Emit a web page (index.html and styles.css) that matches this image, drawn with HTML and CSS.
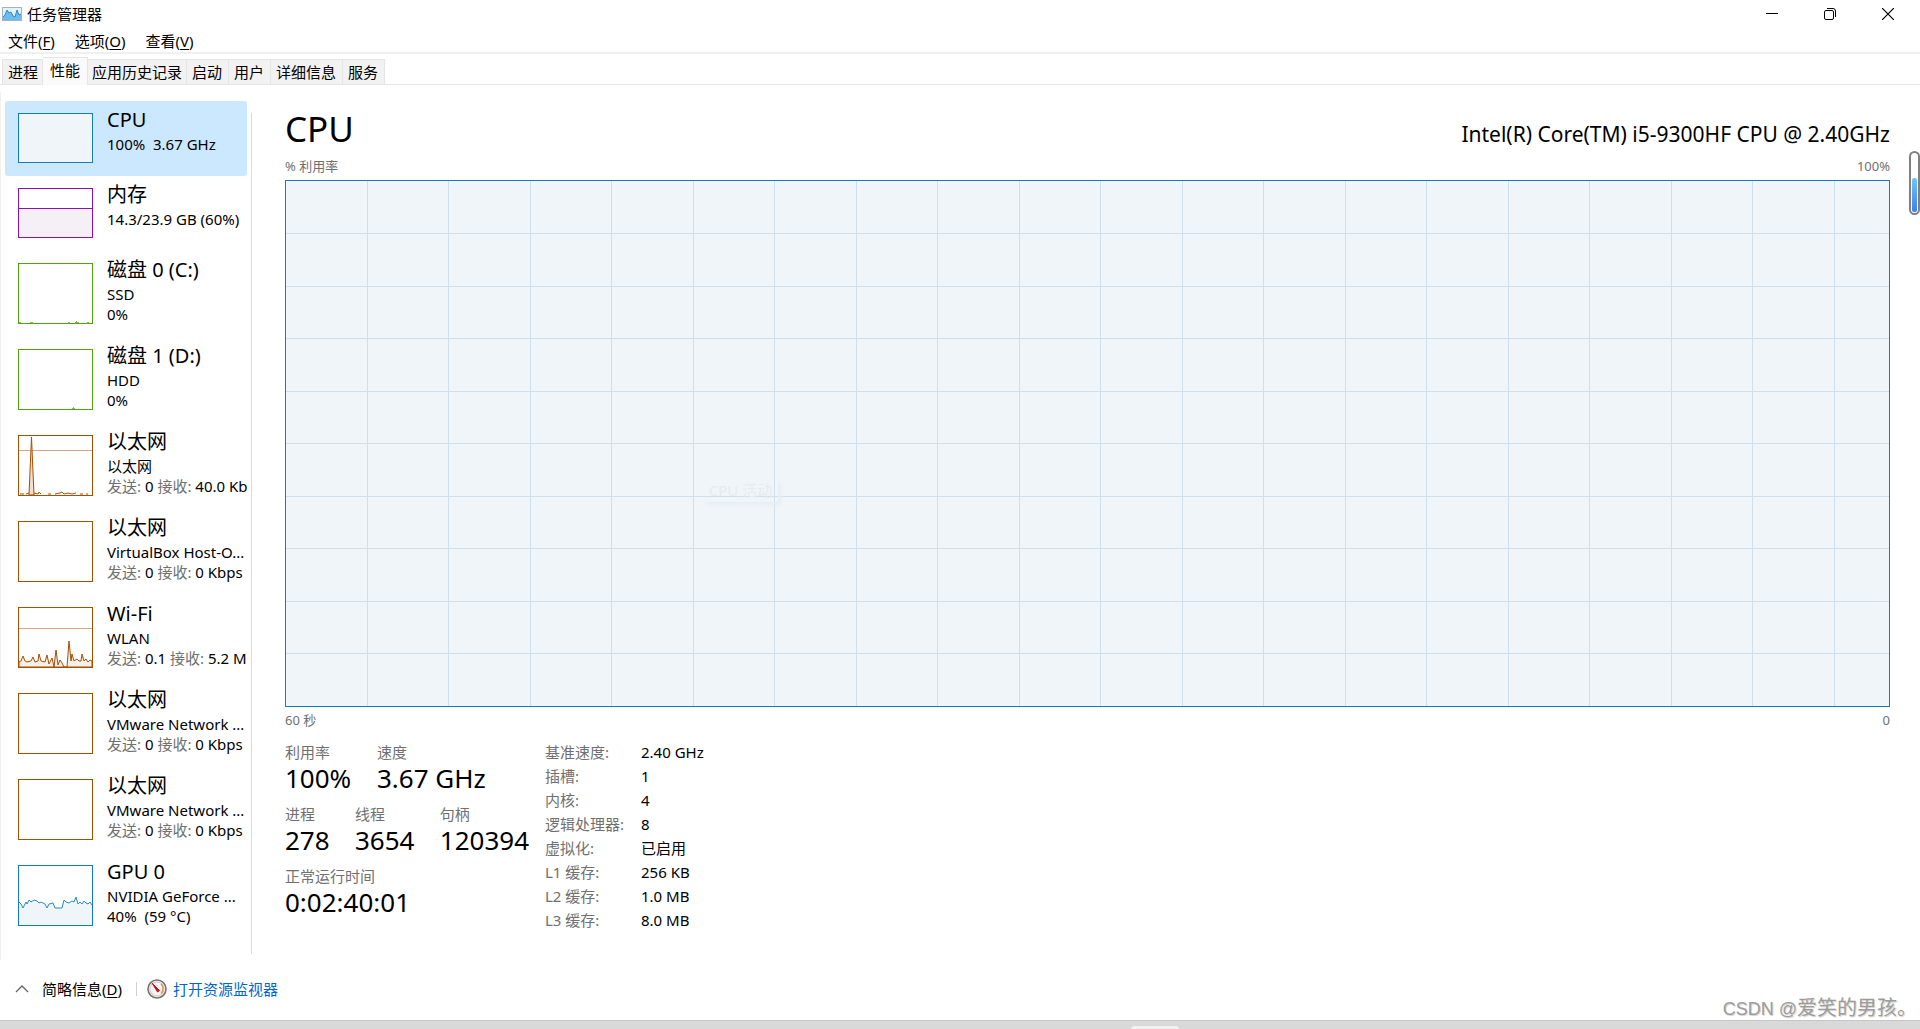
FILE: index.html
```html
<!DOCTYPE html>
<html lang="zh-CN">
<head>
<meta charset="utf-8">
<meta name="viewport" content="width=device-width, initial-scale=1">
<title>任务管理器</title>
<link rel="stylesheet" href="styles.css">
</head>
<body>
<div class="window">
  <header class="titlebar">
    <svg class="app-icon" width="20" height="14" viewBox="0 0 20 14" aria-hidden="true">
      <rect x="0.500" y="0.500" width="19" height="13" fill="#e4f2fb" stroke="#a3b3bf"/>
      <path d="M1 10 3 8 5 3 7 6 9 5 11 9 13 10 15 3 17 8 19 7V13H1Z" fill="#6cbcf0"/>
      <path d="M1 10 3 8 5 3 7 6 9 5 11 9 13 10 15 3 17 8 19 7" fill="none" stroke="#2b87cc"/>
    </svg>
    <span class="app-name">任务管理器</span>
    <div class="window-controls">
      <button type="button" aria-label="最小化"><svg width="12" height="12" viewBox="0 0 12 12"><path d="M0 5.500H12" stroke="#000"/></svg></button>
      <button type="button" aria-label="还原"><svg width="12" height="12" viewBox="0 0 12 12" fill="none" stroke="#000"><rect x="0.500" y="2.500" width="9" height="9" rx="1.500"/><path d="M3 .5H9Q11.500 .5 11.500 3V9"/></svg></button>
      <button type="button" aria-label="关闭"><svg width="12" height="12" viewBox="0 0 12 12"><path d="M0 0 12 12M12 0 0 12" stroke="#000" stroke-width="1.200"/></svg></button>
    </div>
  </header>

  <nav class="menubar">
    <button type="button">文件(<u>F</u>)</button>
    <button type="button">选项(<u>O</u>)</button>
    <button type="button">查看(<u>V</u>)</button>
  </nav>

  <div class="tabs" role="tablist">
    <button type="button" role="tab">进程</button>
    <button type="button" role="tab" class="active" aria-selected="true">性能</button>
    <button type="button" role="tab">应用历史记录</button>
    <button type="button" role="tab">启动</button>
    <button type="button" role="tab">用户</button>
    <button type="button" role="tab">详细信息</button>
    <button type="button" role="tab">服务</button>
  </div>

  <div class="content">
    <aside class="sidebar">
      <button type="button" class="device cpu selected">
        <span class="thumb short filled"></span>
        <span class="info"><span class="name">CPU</span><span class="line">100%&nbsp; 3.67 GHz</span></span>
      </button>
      <button type="button" class="device memory">
        <svg class="thumb short" viewBox="0 0 73 48"><rect y="19" width="73" height="29" fill="#f4f0f5"/><path d="M0 19.500H73" stroke="#8b12ae"/></svg>
        <span class="info"><span class="name">内存</span><span class="line">14.3/23.9 GB (60%)</span></span>
      </button>
      <button type="button" class="device disk">
        <svg class="thumb" viewBox="0 0 73 59"><path d="M0 58.500H2M11 58.500H14M49 58.500H51M56 58.500H60M57.500 57V59M68 58.500H70" stroke="#4da60c" opacity=".7"/></svg>
        <span class="info"><span class="name">磁盘 0 (C:)</span><span class="line">SSD</span><span class="line">0%</span></span>
      </button>
      <button type="button" class="device disk">
        <svg class="thumb" viewBox="0 0 73 59"><path d="M53 58.500H56M54.500 57V59" stroke="#4da60c" opacity=".7"/></svg>
        <span class="info"><span class="name">磁盘 1 (D:)</span><span class="line">HDD</span><span class="line">0%</span></span>
      </button>
      <button type="button" class="device network">
        <svg class="thumb" viewBox="0 0 73 59" fill="none" stroke="#a74f01"><path d="M0 14.500H73" stroke="#d3a780"/><path d="M10 59 12 12 12.500 1 13.500 25 15 59Z" fill="#f2dfce"/><path d="M1 58H5M7 58 10 57M15 57 19 58 20 56 22 58M29 58H32M36 58 41 57 43 56 45 58 49 57 53 58 57 57M61 58H64M68 57V59"/></svg>
        <span class="info"><span class="name">以太网</span><span class="line">以太网</span><span class="line"><i>发送:</i> 0 <i>接收:</i> 40.0 Kb</span></span>
      </button>
      <button type="button" class="device network">
        <span class="thumb"></span>
        <span class="info"><span class="name">以太网</span><span class="line">VirtualBox Host-O...</span><span class="line"><i>发送:</i> 0 <i>接收:</i> 0 Kbps</span></span>
      </button>
      <button type="button" class="device network">
        <svg class="thumb" viewBox="0 0 73 59" fill="none" stroke="#a74f01"><path d="M0 20.500H73" stroke="#d3a780"/><path d="M0 54 2 53 4 48 6 53 8 54 12 53 14 49 16 54 19 53 20 46 22 53 26 54 28 47 30 56 33 50 35 59 37 42 39 57 41 52 43 55 45 59H48L50 33 52 53 53 46 55 53 58 51 60 53H62L63 46 65 53 67 51 69 54 71 52 73 53V59H0Z" fill="#f7efe8"/></svg>
        <span class="info"><span class="name">Wi-Fi</span><span class="line">WLAN</span><span class="line"><i>发送:</i> 0.1 <i>接收:</i> 5.2 M</span></span>
      </button>
      <button type="button" class="device network">
        <span class="thumb"></span>
        <span class="info"><span class="name">以太网</span><span class="line">VMware Network ...</span><span class="line"><i>发送:</i> 0 <i>接收:</i> 0 Kbps</span></span>
      </button>
      <button type="button" class="device network">
        <span class="thumb"></span>
        <span class="info"><span class="name">以太网</span><span class="line">VMware Network ...</span><span class="line"><i>发送:</i> 0 <i>接收:</i> 0 Kbps</span></span>
      </button>
      <button type="button" class="device gpu">
        <svg class="thumb" viewBox="0 0 73 59"><path d="M0 36 2 38 4 42 7 36 8 38 10 34 12 36 15 34 18 35 20 37 22 36 26 38 28 42 30 38 34 37 36 42H43L45 34 47 36 50 37 53 35 55 36 57 31 59 38 61 36 63 38 65 35 67 37 69 38 71 36 73 39V59H0Z" fill="#f0f5fa"/><path d="M0 36 2 38 4 42 7 36 8 38 10 34 12 36 15 34 18 35 20 37 22 36 26 38 28 42 30 38 34 37 36 42H43L45 34 47 36 50 37 53 35 55 36 57 31 59 38 61 36 63 38 65 35 67 37 69 38 71 36 73 39" fill="none" stroke="#2a8bc0"/></svg>
        <span class="info"><span class="name">GPU 0</span><span class="line">NVIDIA GeForce ...</span><span class="line">40%&nbsp; (59 °C)</span></span>
      </button>
    </aside>

    <main class="details">
      <div class="heading">
        <h1>CPU</h1>
        <p class="model">Intel(R) Core(TM) i5-9300HF CPU @ 2.40GHz</p>
      </div>
      <div class="axis top"><span>% 利用率</span><span>100%</span></div>
      <div class="chart">
        <svg width="100%" height="100%" aria-label="CPU 利用率">
          <g class="grid">
            <line x1="5.08%" x2="5.08%" y2="100%"/><line x1="10.16%" x2="10.16%" y2="100%"/><line x1="15.25%" x2="15.25%" y2="100%"/><line x1="20.33%" x2="20.33%" y2="100%"/><line x1="25.41%" x2="25.41%" y2="100%"/><line x1="30.50%" x2="30.50%" y2="100%"/><line x1="35.58%" x2="35.58%" y2="100%"/><line x1="40.66%" x2="40.66%" y2="100%"/><line x1="45.75%" x2="45.75%" y2="100%"/><line x1="50.83%" x2="50.83%" y2="100%"/><line x1="55.91%" x2="55.91%" y2="100%"/><line x1="61%" x2="61%" y2="100%"/><line x1="66.08%" x2="66.08%" y2="100%"/><line x1="71.16%" x2="71.16%" y2="100%"/><line x1="76.25%" x2="76.25%" y2="100%"/><line x1="81.33%" x2="81.33%" y2="100%"/><line x1="86.41%" x2="86.41%" y2="100%"/><line x1="91.50%" x2="91.50%" y2="100%"/><line x1="96.58%" x2="96.58%" y2="100%"/>
            <line y1="10%" y2="10%" x2="100%"/><line y1="20%" y2="20%" x2="100%"/><line y1="30%" y2="30%" x2="100%"/><line y1="40%" y2="40%" x2="100%"/><line y1="50%" y2="50%" x2="100%"/><line y1="60%" y2="60%" x2="100%"/><line y1="70%" y2="70%" x2="100%"/><line y1="80%" y2="80%" x2="100%"/><line y1="90%" y2="90%" x2="100%"/>
          </g>
        </svg>
        <span class="tooltip">CPU 活动</span>
      </div>
      <div class="axis bottom"><span>60 秒</span><span>0</span></div>

      <div class="stats">
        <div class="primary">
          <dl>
            <div class="usage"><dt>利用率</dt><dd>100%</dd></div>
            <div><dt>速度</dt><dd>3.67 GHz</dd></div>
          </dl>
          <dl>
            <div class="processes"><dt>进程</dt><dd>278</dd></div>
            <div class="threads"><dt>线程</dt><dd>3654</dd></div>
            <div><dt>句柄</dt><dd>120394</dd></div>
          </dl>
          <dl>
            <div><dt>正常运行时间</dt><dd>0:02:40:01</dd></div>
          </dl>
        </div>
        <table class="specs">
          <tbody>
            <tr><th scope="row">基准速度:</th><td>2.40 GHz</td></tr>
            <tr><th scope="row">插槽:</th><td>1</td></tr>
            <tr><th scope="row">内核:</th><td>4</td></tr>
            <tr><th scope="row">逻辑处理器:</th><td>8</td></tr>
            <tr><th scope="row">虚拟化:</th><td>已启用</td></tr>
            <tr><th scope="row">L1 缓存:</th><td>256 KB</td></tr>
            <tr><th scope="row">L2 缓存:</th><td>1.0 MB</td></tr>
            <tr><th scope="row">L3 缓存:</th><td>8.0 MB</td></tr>
          </tbody>
        </table>
      </div>
    </main>
  </div>

  <footer class="footer">
    <button type="button" class="fewer">
      <svg width="14" height="8" viewBox="0 0 14 8" fill="none" stroke="#666" stroke-width="1.300"><path d="M1 7 7 1 13 7"/></svg>
      <span>简略信息(<u>D</u>)</span>
    </button>
    <span class="separator"></span>
    <a class="monitor" href="#">
      <svg width="20" height="20" viewBox="0 0 20 20" aria-hidden="true">
        <circle cx="10" cy="10" r="9" fill="#f4f4f2" stroke="#77736f" stroke-width="1.600"/>
        <circle cx="10" cy="10" r="7" fill="none" stroke="#cfcbc5"/>
        <path d="M14 5A6.500 6.500 0 0 1 14 14.500" fill="none" stroke="#e8924c" stroke-width="1.500"/>
        <path d="M5 4 12.500 11.500 10.500 13Z" fill="#d0131b" stroke="#d0131b"/>
      </svg>
      <span>打开资源监视器</span>
    </a>
  </footer>
  <div class="taskbar"><span class="taskbar-tile"></span></div>
</div>
<div class="gauge"><span></span></div>
<div class="watermark"><span class="site">CSDN @</span>爱笑的男孩。</div>
</body>
</html>
```
FILE: styles.css
```css
* { box-sizing: border-box; }

body {
  margin: 0;
  background: #fff;
  color: #000;
  font: 15px/20px "Noto Sans", "Noto Sans CJK SC", sans-serif;
}

button {
  margin: 0;
  padding: 0;
  border: 0;
  background: none;
  color: inherit;
  font: inherit;
  text-align: left;
}

.window {
  display: flex;
  flex-direction: column;
  min-height: 100vh;
}

/* Title bar and menus */
.titlebar {
  display: flex;
  align-items: center;
  height: 28px;
  padding: 0 3px 0 2px;
}
.app-name { margin-left: 5px; }
.window-controls { display: flex; margin-left: auto; }
.window-controls button {
  display: flex;
  align-items: center;
  justify-content: center;
  width: 58px;
  height: 28px;
}

.menubar {
  display: flex;
  align-items: flex-start;
  gap: 20px;
  height: 26px;
  padding: 3px 8px 0;
  border-bottom: 2px solid #f0f0f0;
}
u { text-underline-offset: 2px; }

/* Tabs */
.tabs {
  display: flex;
  align-items: flex-end;
  height: 31px;
  padding-left: 2px;
  border-bottom: 1px solid #e5e5e5;
}
.tabs button {
  height: 25px;
  padding: 0 6px 0 5px;
  border: 1px solid #e5e5e5;
  border-width: 1px 1px 0 0;
  background: #f2f2f2;
}
.tabs button:first-child {
  padding-right: 4px;
  border-left-width: 1px;
}
.tabs .active {
  height: 28px;
  margin-bottom: -1px;
  padding: 0 7px 4px;
  background: #fafafa;
}
.tabs .active + button { padding: 0 4px; }

/* Body */
.content {
  display: flex;
  flex: 1;
  margin-top: 7px;
  border-left: 1px solid #f0f0f0;
}

.sidebar {
  display: flex;
  flex: none;
  flex-direction: column;
  width: 251px;
  margin-bottom: 6px;
  padding: 9px 0 0 4px;
  background: linear-gradient(#d9d9d9, #d9d9d9) right 21px / 1px 100% no-repeat;
}
.device {
  display: flex;
  gap: 14px;
  padding: 5px 0 6px 13px;
}
.selected {
  width: 242px;
  border-radius: 3px;
  background: #cce8ff;
}
.thumb {
  flex: none;
  width: 75px;
  height: 61px;
  margin: 7px 0;
  border: 1px solid;
  background: #fff;
}
.short { height: 50px; }
.filled { background: #f0f5fa; }
.cpu .thumb, .gpu .thumb { border-color: #117dbb; }
.memory .thumb { border-color: #8b12ae; }
.disk .thumb { border-color: #4da60c; }
.network .thumb { border-color: #a74f01; }
.info {
  display: flex;
  flex: 1;
  flex-direction: column;
  min-width: 0;
}
.name {
  font-size: 20px;
  line-height: 28px;
}
.line { white-space: nowrap; }
.line i {
  color: #707070;
  font-style: normal;
}

/* Details pane */
.details {
  display: flex;
  flex: 1;
  flex-direction: column;
  min-width: 0;
  padding: 13px 30px 26px 33px;
}
.heading {
  display: flex;
  align-items: baseline;
  justify-content: space-between;
}
h1 {
  margin: 0;
  font-size: 35px;
  font-weight: 400;
  line-height: 48px;
}
.model {
  margin: 0;
  font-size: 21px;
}
.axis {
  display: flex;
  justify-content: space-between;
  color: #707070;
  font-size: 13px;
}
.top { margin: 3px 0 4px; }
.bottom { margin-top: 3px; }
.chart {
  position: relative;
  flex: 1;
  min-height: 200px;
  border: 1px solid #117dbb;
  background: #f0f5fa;
}
.chart svg {
  position: absolute;
  inset: 0;
}
.grid {
  stroke: #cee0ee;
  shape-rendering: crispEdges;
}
.tooltip {
  position: absolute;
  top: 57%;
  left: 26%;
  padding: 0 6px 2px;
  border-radius: 3px;
  box-shadow: 3px 3px 4px #e6edf3;
  color: #e6ebf0;
}

.stats {
  display: flex;
  gap: 16px;
  margin-top: 12px;
}
dl {
  display: flex;
  height: 62px;
  margin: 0;
}
dt { color: #707070; }
dd {
  margin: 0;
  font-size: 26px;
  line-height: 32px;
}
.usage { width: 92px; }
.processes { width: 70px; }
.threads { width: 85px; }
.primary { width: 244px; }
.specs {
  align-self: flex-start;
  border-spacing: 0;
}
.specs th, .specs td {
  height: 24px;
  padding: 0 0 4px;
  font-weight: 400;
  text-align: left;
}
.specs th {
  width: 96px;
  color: #707070;
}

/* Footer */
.footer {
  display: flex;
  align-items: center;
  height: 60px;
  padding: 0 0 3px 15px;
}
.fewer {
  display: flex;
  align-items: center;
  gap: 13px;
}
.separator {
  width: 1px;
  height: 14px;
  margin: 0 10px 0 14px;
  background: #d0d0d0;
}
.monitor {
  display: flex;
  align-items: center;
  gap: 6px;
  color: #0066cc;
  text-decoration: none;
}

.taskbar {
  display: flex;
  justify-content: center;
  height: 9px;
  padding: 5px 0 0 390px;
  border-top: 1px solid #c4c6c4;
  background: #d9d9d9;
}
.taskbar-tile {
  width: 48px;
  border-radius: 4px 4px 0 0;
  background: #f0f0f0;
}

/* Overlays */
.gauge {
  position: absolute;
  top: 151px;
  right: 0;
  display: flex;
  align-items: flex-end;
  width: 11px;
  height: 64px;
  padding: 1px;
  border: 2px solid #808080;
  border-radius: 6px;
  background: #fff;
}
.gauge span {
  width: 5px;
  height: 34px;
  border-radius: 2px;
  background: linear-gradient(#70c8f8, #3880f8);
}
.watermark {
  position: absolute;
  right: 3px;
  bottom: 6px;
  color: #9c9c9c;
  font: 20px/28px "Liberation Sans", "Noto Sans CJK SC", sans-serif;
  text-shadow: 1px 1px 1px #d0d0d0;
}
.site { font-size: 18px; }
```
